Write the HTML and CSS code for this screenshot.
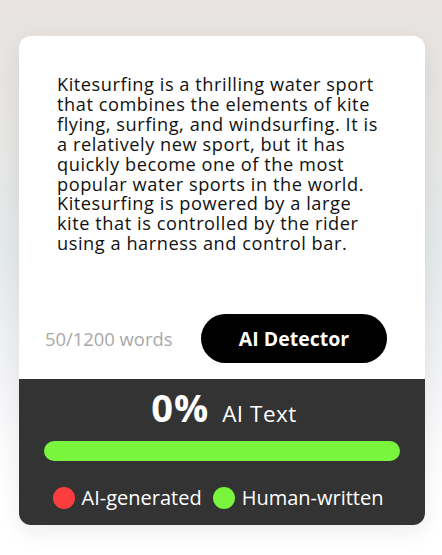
FILE: index.html
```
<!DOCTYPE html>
<html>
<head>
<meta charset="utf-8">
<link rel="stylesheet" href="styles.css">
</head>
<body>
<div class="card">
  <div class="top">
    <p class="text">Kitesurfing is a thrilling water sport that combines the elements of kite flying, surfing, and windsurfing. It is a relatively new sport, but it has quickly become one of the most popular water sports in the world. Kitesurfing is powered by a large kite that is controlled by the rider using a harness and control bar.</p>
    <div class="row">
      <span class="count">50/1200 words</span>
      <button class="btn">AI Detector</button>
    </div>
  </div>
  <div class="result">
    <div class="score"><span class="pct">0%</span><span class="label">AI Text</span></div>
    <div class="bar"></div>
    <div class="legend">
      <span class="dot red"></span><span class="lg">AI-generated</span>
      <span class="dot green"></span><span class="lg">Human-written</span>
    </div>
  </div>
</div>
</body>
</html>
```
FILE: styles.css
```
html, body {
  margin: 0;
  padding: 0;
}
body {
  width: 442px;
  height: 555px;
  overflow: hidden;
  font-family: "Open Sans", "DejaVu Sans", sans-serif;
  background: linear-gradient(180deg, #e8e3e0 0%, #e6e7e6 30%, #e4e9ea 45%, #f1f2f5 65%, #fbfbfc 80%, #ffffff 90%);
  padding-top: 36px;
  box-sizing: border-box;
}
.card {
  margin-left: 19px;
  width: 406px;
  border-radius: 12px;
  overflow: hidden;
  background: #fff;
  box-shadow: 0 6px 22px rgba(0, 0, 0, 0.08);
}
.top {
  height: 343px;
  box-sizing: border-box;
  display: flex;
  flex-direction: column;
  padding: 0 0 16px 0;
}
.text {
  margin: 0;
  padding: 39px 36px 0 38px;
  font-size: 18.2px;
  line-height: 19.9px;
  letter-spacing: 0.55px;
  color: #111;
}
.row {
  margin-top: auto;
  display: flex;
  align-items: center;
  padding: 0 38px 0 26px;
}
.count {
  font-size: 18.4px;
  color: #a8a8a8;
}
.btn {
  margin-left: auto;
  width: 186px;
  height: 49px;
  border: none;
  border-radius: 25px;
  background: #000;
  color: #fff;
  font-family: inherit;
  font-weight: 700;
  font-size: 19.5px;
  padding: 0;
}
.result {
  height: 146px;
  background: #333333;
  color: #fff;
  display: flex;
  flex-direction: column;
  align-items: center;
  box-sizing: border-box;
  padding-top: 5px;
}
.score {
  display: flex;
  align-items: baseline;
  gap: 13px;
  height: 46px;
  line-height: 46px;
  margin-left: 4px;
}
.pct {
  font-size: 38px;
  font-weight: 700;
  letter-spacing: 1px;
}
.label {
  font-size: 22.5px;
  letter-spacing: 0.5px;
}
.bar {
  margin-top: 11px;
  width: 356px;
  height: 20px;
  border-radius: 10px;
  background: #79f53e;
}
.legend {
  margin-top: 25px;
  margin-right: 8px;
  display: flex;
  align-items: center;
  font-size: 20px;
  line-height: 24px;
}
.dot {
  width: 22px;
  height: 22px;
  border-radius: 50%;
  margin-right: 7px;
}
.red { background: #fd3c3e; }
.green { background: #79f53e; margin-left: 11px; }
```
